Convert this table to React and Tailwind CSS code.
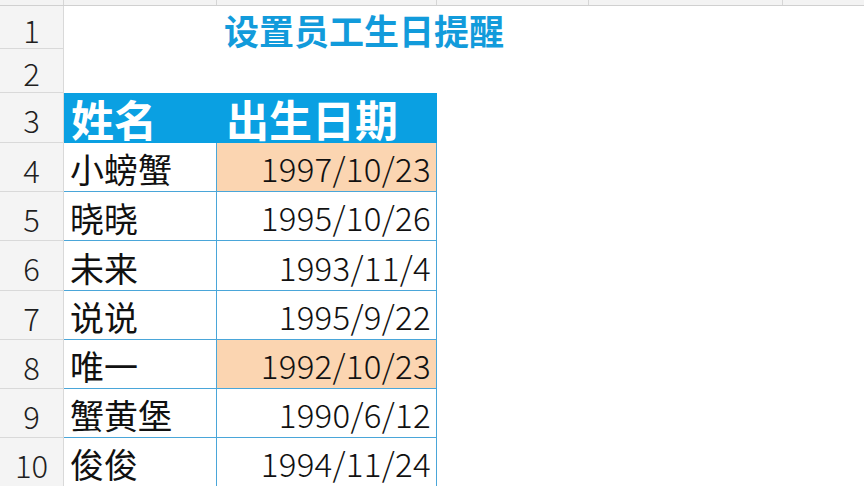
import React from 'react';

const rows = [
    { n: 4, name: '小螃蟹', date: '1997/10/23', hl: true, h: 'h-[49px]' },
    { n: 5, name: '晓晓', date: '1995/10/26', h: 'h-[49px]' },
    { n: 6, name: '未来', date: '1993/11/4', h: 'h-[50px]' },
    { n: 7, name: '说说', date: '1995/9/22', h: 'h-[49px]' },
    { n: 8, name: '唯一', date: '1992/10/23', hl: true, h: 'h-[49px]' },
    { n: 9, name: '蟹黄堡', date: '1990/6/12', h: 'h-[49px]' },
    { n: 10, name: '俊俊', date: '1994/11/24', h: 'h-[49px]' },
];

function RowHead({ n }) {
    return (
        <div className="w-[64px] shrink-0 h-full flex items-center justify-center pt-1 bg-[#f4f4f4] border-r border-b border-[#d9d9d9] text-[31px] font-light text-[#1f1f1f]">
            {n}
        </div>
    );
}

export default function App() {
    return (
        <div className="w-[864px] h-[486px] overflow-hidden bg-white font-['Noto_Sans_CJK_SC','Noto_Sans',sans-serif] leading-none">
            {/* column header strip, cut off at the top */}
            <div className="h-[6px] flex bg-[#f3f3f3] border-b border-[#d0d0d0]">
                <div className="w-[64px] border-r border-[#d6d6d6]" />
                <div className="w-[153px] border-r border-[#d6d6d6]" />
                <div className="w-[220px] border-r border-[#d6d6d6]" />
                <div className="w-[152px] border-r border-[#d6d6d6]" />
                <div className="w-[194px] border-r border-[#d6d6d6]" />
                <div className="flex-1" />
            </div>

            {/* row 1: title */}
            <div className="h-[43px] flex">
                <RowHead n={1} />
                <div className="flex-1 flex items-center pl-[160px] pt-[4px] text-[35px] font-bold text-[#129bdb]">
                    设置员工生日提醒
                </div>
            </div>

            {/* row 2 */}
            <div className="h-[44px] flex">
                <RowHead n={2} />
                <div className="flex-1" />
            </div>

            {/* row 3: table header */}
            <div className="h-[50px] flex">
                <RowHead n={3} />
                <div className="w-[373px] flex bg-[#0aa0e2] text-white font-bold text-[43px]">
                    <div className="w-[153px] flex items-center pl-[7px]">姓名</div>
                    <div className="w-[220px] flex items-center pl-[9px]">出生日期</div>
                </div>
            </div>

            {rows.map((r) => (
                <div key={r.n} className={`${r.h} flex`}>
                    <RowHead n={r.n} />
                    <div className="w-[373px] flex border-b border-r border-[#4aa6d9] text-[#111]">
                        <div className="w-[153px] flex items-center pl-[6px] pt-[4px] border-r border-[#4aa6d9] text-[34px]">
                            {r.name}
                        </div>
                        <div
                            className={`flex-1 flex items-center justify-end pr-[5px] pt-[3px] text-[33px] font-light tracking-[0.3px] ${r.hl ? 'bg-[#fbd5b1]' : ''}`}
                        >
                            {r.date}
                        </div>
                    </div>
                </div>
            ))}
        </div>
    );
}
